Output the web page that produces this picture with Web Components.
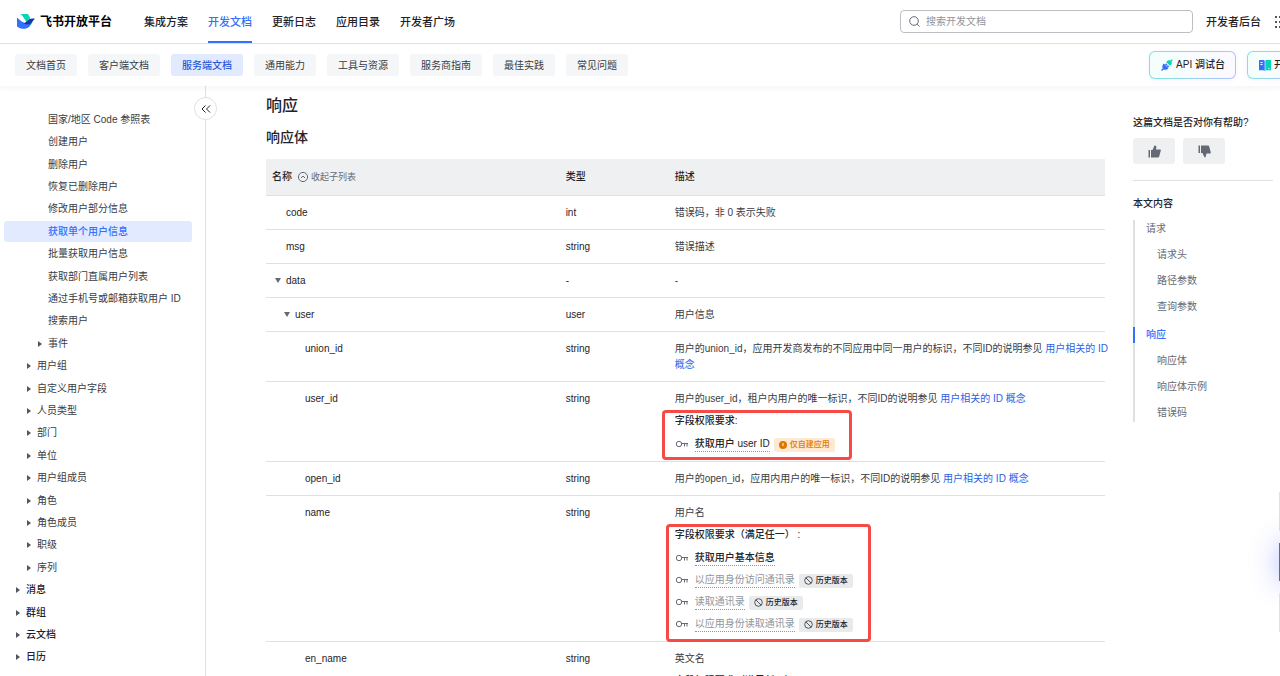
<!DOCTYPE html>
<html lang="zh-CN">
<head>
<meta charset="utf-8">
<title>获取单个用户信息 - 飞书开放平台</title>
<style>
  body {
    margin: 0;
    height: 100vh;
    overflow: hidden;
    font-family: "Liberation Sans", "Noto Sans CJK SC", sans-serif;
    font-size: 10px;
    line-height: 16px;
    color: #1f2329;
    background: #fff;
    --blue: #3370ff;
    --line: #dee0e3;
  }
</style>
</head>
<body>
<doc-page>
  <doc-header slot="header"></doc-header>
  <doc-tabs slot="header"></doc-tabs>
  <doc-sidebar slot="side"></doc-sidebar>
  <param-table></param-table>
  <doc-toc slot="toc"></doc-toc>
</doc-page>
<side-dock></side-dock>

<script>
class DocPage extends HTMLElement {
  constructor() {
    super();
    this.attachShadow({ mode: "open" });
    this.shadowRoot.innerHTML = `
      <style>
        :host { display: flex; flex-direction: column; height: 100vh; }
        header { position: relative; z-index: 1; background: #fff; box-shadow: 0 2px 6px rgba(31,35,41,.05); }
        .body { display: flex; flex: 1; min-height: 0; }
        main { flex: 1; min-width: 0; padding: 8px 28px 0 60px; overflow: hidden; }
        h1, h2 { margin: 0; font-weight: 500; }
        h1 { font-size: 16px; line-height: 24px; }
        h2 { font-size: 14px; line-height: 20px; margin: 9px 0 12px; }
      </style>
      <header><slot name="header"></slot></header>
      <div class="body">
        <slot name="side"></slot>
        <main>
          <h1>响应</h1>
          <h2>响应体</h2>
          <slot></slot>
        </main>
        <slot name="toc"></slot>
      </div>
    `;
  }
}

class DocHeader extends HTMLElement {
  constructor() {
    super();
    this.attachShadow({ mode: "open" });
    this.shadowRoot.innerHTML = `
      <style>
        :host { display: flex; align-items: center; height: 43px; padding-left: 17px; border-bottom: 1px solid var(--line); overflow: hidden; font-size: 11px; font-weight: 500; }
        a { color: inherit; text-decoration: none; white-space: nowrap; }
        .logo { display: flex; align-items: center; gap: 5px; font-size: 12px; font-weight: 700; color: #000; }
        nav { display: flex; gap: 20px; margin-left: 32px; align-self: stretch; }
        nav a { display: flex; align-items: center; border-bottom: 2px solid transparent; padding-top: 2px; }
        nav a.on { color: var(--blue); border-color: var(--blue); }
        label { display: flex; align-items: center; gap: 6px; box-sizing: border-box; width: 293px; height: 23px; margin-left: auto; padding: 0 8px; border: 1px solid #bbbfc4; border-radius: 4px; }
        input { flex: 1; min-width: 0; border: 0; outline: 0; padding: 0; font: inherit; font-size: 10px; font-weight: 400; background: none; }
        input::placeholder { color: #8f959e; }
        .console { margin: 0 14px 0 13px; }
        button { border: 0; background: none; padding: 0; margin-right: -7px; display: flex; }
      </style>
      <a class="logo" href="#">
        <svg width="18" height="15" viewBox="0 0 18 15">
          <path d="M3.400 0h7.200c1.300 1.200 2.200 2.800 2.600 4.600-1.500.5-2.800 1.700-4 2.900C7.500 4.600 5.800 2 3.400 0z" fill="#00d6b9"/>
          <path d="M0 3.600c2.800 2.900 6.300 5.400 10.500 6.300 2 .4 3.700-.3 5-2.400C13.800 12 11 14.800 6.900 14.800c-2.700 0-5-.8-6.900-2.300z" fill="#3370ff"/>
          <path d="M18 4.800c-3.400-1.100-6.300 0-8.700 2.600-.9.900-1.700 1.500-2.700 2 3.500 1.500 6.700 1.500 8.600-1.200 1-1.500 1.600-2.600 2.800-3.400z" fill="#133c9a"/>
        </svg>飞书开放平台</a>
      <nav>
        <a href="#">集成方案</a><a class="on" href="#">开发文档</a><a href="#">更新日志</a><a href="#">应用目录</a><a href="#">开发者广场</a>
      </nav>
      <label>
        <svg width="11" height="11" viewBox="0 0 11 11" fill="none" stroke="#646a73"><circle cx="5" cy="5" r="4.300"/><path d="M8.200 8.200l2.300 2.300"/></svg>
        <input type="text" placeholder="搜索开发文档" aria-label="搜索开发文档">
      </label>
      <a class="console" href="#">开发者后台</a>
      <button aria-label="更多应用">
        <svg width="12" height="12" viewBox="0 0 12 12" fill="#51565d"><path d="M0 0h2v2H0zM4 0h2v2H4zM8 0h2v2H8zM0 5h2v2H0zM4 5h2v2H4zM8 5h2v2H8zM0 10h2v2H0zM4 10h2v2H4zM8 10h2v2H8z"/></svg>
      </button>
    `;
  }
}

class DocTabs extends HTMLElement {
  constructor() {
    super();
    this.attachShadow({ mode: "open" });
    this.shadowRoot.innerHTML = `
      <style>
        :host { display: flex; align-items: center; gap: 11px; height: 42px; padding-left: 15px; overflow: hidden; }
        a { padding: 4px 11px 2px; border-radius: 3px; background: #f5f6f7; color: #373c43; text-decoration: none; white-space: nowrap; }
        a.on { background: #e1eaff; color: #245bdb; font-weight: 500; }
        .tools { display: flex; gap: 11px; margin: 0 -15px 0 auto; }
        button { display: flex; align-items: center; gap: 3px; height: 28px; padding: 0 10px 0 11px; border: 1px solid transparent; border-radius: 6px; font: inherit; font-weight: 500; color: #1f2329; white-space: nowrap;
          background: linear-gradient(100deg, #f3fffd, #fdf9ff) padding-box, linear-gradient(100deg, #7fe5da, #b3c0ff) border-box; box-shadow: 0 1px 5px rgba(51,112,255,.08); }
      </style>
      <a href="#">文档首页</a><a href="#">客户端文档</a><a class="on" href="#">服务端文档</a><a href="#">通用能力</a><a href="#">工具与资源</a><a href="#">服务商指南</a><a href="#">最佳实践</a><a href="#">常见问题</a>
      <div class="tools">
        <button>
          <svg width="12" height="12" viewBox="0 0 12 12">
            <path d="M5.200 3C6.300 1.500 8 .9 9.500 1.500L11 .2l.8.800-1.300 1.500c.6 1.500.2 3.200-1.500 4.300z" fill="#00d6b9"/>
            <path d="M2.800 4.600l4.600 4.600c-1.400 1.500-3.200 1.900-4.700 1.200L1 12l-.9-.9 1.500-1.700C1 7.800 1.300 6 2.800 4.600zM4 5.500l1.200-1.200L6.500 5.600 5.300 6.800zM5.700 7.300l1.200-1.200 1.300 1.300L7 8.600z" fill="#3370ff"/>
          </svg>API 调试台</button>
        <button>
          <svg width="12" height="11" viewBox="0 0 12 11">
            <path d="M0 0h4.500c.6 0 1 .3 1.200.7V11c-.3-.5-.7-.7-1.200-.7H0z" fill="#3370ff"/><path d="M12 0H7.500c-.6 0-1 .3-1.200.7V11c.3-.5.700-.7 1.200-.7H12z" fill="#00d6b9"/>
            <path d="M1.500 2.500h2M1.500 4.500h2M9.500 8.500h1" stroke="#fff"/>
          </svg>开</button>
      </div>
    `;
  }
}

class DocSidebar extends HTMLElement {
  constructor() {
    super();
    this.attachShadow({ mode: "open" });
    // [depth, label, has children]
    const items = [
      [3, "国家/地区 Code 参照表"], [3, "创建用户"], [3, "删除用户"], [3, "恢复已删除用户"], [3, "修改用户部分信息"],
      [3, "获取单个用户信息"], [3, "批量获取用户信息"], [3, "获取部门直属用户列表"], [3, "通过手机号或邮箱获取用户 ID"], [3, "搜索用户"],
      [2, "事件", 1], [1, "用户组", 1], [1, "自定义用户字段", 1], [1, "人员类型", 1], [1, "部门", 1], [1, "单位", 1],
      [1, "用户组成员", 1], [1, "角色", 1], [1, "角色成员", 1], [1, "职级", 1], [1, "序列", 1],
      [0, "消息", 1], [0, "群组", 1], [0, "云文档", 1], [0, "日历", 1],
    ];
    const rows = items.map(([depth, label, more]) => `
      <li><a href="#" class="d${depth}${label === "获取单个用户信息" ? " on" : ""}">${more ? '<svg width="4" height="6" viewBox="0 0 4 6"><path d="M0 0l4 3-4 3z" fill="#51565d"/></svg>' : ""}${label}</a></li>`).join("");
    this.shadowRoot.innerHTML = `
      <style>
        :host { display: flex; position: relative; box-sizing: border-box; width: 206px; border-right: 1px solid var(--line); }
        ul { flex: 1; display: flex; flex-direction: column; list-style: none; margin: 0; padding: 22px 13px 8px 4px; }
        li { flex: 1; display: flex; align-items: center; }
        a { flex: 1; display: flex; align-items: center; gap: 6px; box-sizing: border-box; height: 21px; padding-top: 1px; border-radius: 3px; color: #373c43; text-decoration: none; white-space: nowrap; }
        .d0 { padding-left: 12px; font-weight: 500; color: #1f2329; }
        .d1 { padding-left: 23px; }
        .d2 { padding-left: 34px; }
        .d3 { padding-left: 44px; }
        .on { background: #e1eaff; color: var(--blue); font-weight: 500; }
        button { position: absolute; top: 11px; right: -12px; width: 23px; height: 23px; padding: 0; display: grid; place-items: center; border: 1px solid var(--line); border-radius: 50%; background: #fff; }
      </style>
      <ul>${rows}</ul>
      <button aria-label="收起目录">
        <svg width="10" height="8" viewBox="0 0 10 8" fill="none" stroke="#1f2329"><path d="M4.500 .5L1 4l3.500 3.500M9 .5L5.500 4 9 7.500"/></svg>
      </button>
    `;
  }
}

class ScopeBox extends HTMLElement {
  constructor() {
    super();
    this.attachShadow({ mode: "open" });
    this.shadowRoot.innerHTML = `
      <style>
        :host { display: block; position: relative; margin: 3px 0 -2px; line-height: 22px; }
        .title { margin-bottom: 1px; color: #1f2329; }
        b { font-weight: 500; }
        .mark { display: none; position: absolute; border: 3px solid #f54a45; border-radius: 4px; box-sizing: border-box; pointer-events: none; }
        :host([mark="single"]) .mark { display: block; top: 0; left: -13px; width: 190px; height: 50px; }
        :host([mark="list"]) .mark { display: block; top: 0; left: -9px; width: 205px; height: 118px; }
      </style>
      <div class="title"><b>${this.getAttribute("heading")}</b>${this.getAttribute("colon") || ""}</div>
      <slot></slot>
      <div class="mark"></div>
    `;
  }
}

class ScopeItem extends HTMLElement {
  constructor() {
    super();
    this.attachShadow({ mode: "open" });
    const tag = this.getAttribute("tag");
    const icon = tag === "custom"
      ? '<svg width="8" height="8" viewBox="0 0 8 8"><circle cx="4" cy="4" r="4" fill="#de7802"/><path d="M4 2v3" stroke="#fff"/></svg>仅自建应用'
      : '<svg width="9" height="9" viewBox="0 0 9 9" fill="none" stroke="#51565d"><circle cx="4.500" cy="4.500" r="3.800"/><path d="M2 2l5 5"/></svg>历史版本';
    this.shadowRoot.innerHTML = `
      <style>
        :host { display: flex; align-items: center; height: 22px; white-space: nowrap; }
        a { margin: 0 4px 0 6px; line-height: 14px; border-bottom: 1px dotted #8f959e; color: #1f2329; font-weight: 500; text-decoration: none; }
        :host([tag="old"]) a { color: #8f959e; font-weight: 400; }
        .tag { display: flex; align-items: center; gap: 3px; height: 14px; margin-top: 1px; padding: 0 5px; border-radius: 2px; font-size: 8px; font-weight: 500; background: #e9eaeb; color: #1f2329; }
        .tag.custom { background: #feead2; color: #de7802; }
      </style>
      <svg width="14" height="8" viewBox="0 0 14 8" fill="none" stroke="#646a73"><circle cx="4" cy="4" r="2.700"/><path d="M6.700 3.500H13M9.500 3.500v3M12 3.500v3"/></svg>
      <a href="#"><slot></slot></a>
      ${tag ? `<span class="tag ${tag}">${icon}</span>` : ""}
    `;
  }
}

class ParamTable extends HTMLElement {
  constructor() {
    super();
    this.attachShadow({ mode: "open" });
    const rows = [
      [1, "code", "int", "错误码，非 0 表示失败"],
      [1, "msg", "string", "错误描述"],
      [1, "data", "-", "-", 1],
      [2, "user", "user", "用户信息", 1],
      [3, "union_id", "string", `<span class="line">用户的union_id，应用开发商发布的不同应用中同一用户的标识，不同ID的说明参见 <a href="#">用户相关的 ID<br>概念</a></span>`],
      [3, "user_id", "string", `用户的user_id，租户内用户的唯一标识，不同ID的说明参见 <a href="#">用户相关的 ID 概念</a>
        <scope-box heading="字段权限要求" colon=":" mark="single">
          <scope-item tag="custom">获取用户 user ID</scope-item>
        </scope-box>`],
      [3, "open_id", "string", `用户的open_id，应用内用户的唯一标识，不同ID的说明参见 <a href="#">用户相关的 ID 概念</a>`],
      [3, "name", "string", `用户名
        <scope-box heading="字段权限要求（满足任一）" colon=" :" mark="list">
          <scope-item>获取用户基本信息</scope-item>
          <scope-item tag="old">以应用身份访问通讯录</scope-item>
          <scope-item tag="old">读取通讯录</scope-item>
          <scope-item tag="old">以应用身份读取通讯录</scope-item>
        </scope-box>`],
      [3, "en_name", "string", `英文名
        <scope-box heading="字段权限要求（满足任一）" colon=" :"></scope-box>`],
    ];
    const body = rows.map(([depth, name, type, desc, open]) => `
      <tr>
        <td class="name d${depth}">${open ? '<svg width="6" height="5" viewBox="0 0 6 5"><path d="M0 0h6L3 5z" fill="#646a73"/></svg>' : ""}${name}</td>
        <td class="type">${type}</td>
        <td>${desc}</td>
      </tr>`).join("");
    this.shadowRoot.innerHTML = `
      <style>
        :host { display: block; }
        table { width: 100%; table-layout: fixed; border-collapse: separate; border-spacing: 0; }
        th, td { box-sizing: border-box; padding: 9px 0 8px 6px; text-align: left; vertical-align: top; border-bottom: 1px solid var(--line); }
        th { padding-top: 10px; padding-bottom: 10px; font-weight: 500; background: #eff0f1; }
        th:nth-child(1) { width: 35%; }
        th:nth-child(2) { width: 13%; }
        th:nth-child(1) div { display: flex; align-items: center; }
        button { display: flex; align-items: center; gap: 2px; margin-left: 5px; padding: 0; border: 0; background: none; font: inherit; font-size: 9px; font-weight: 400; color: #646a73; }
        td { color: #373c43; }
        .name, .type { color: #1f2329; font-weight: 500; }
        .name svg { margin: 0 5px 1px -11px; vertical-align: middle; }
        .d1 { padding-left: 20px; }
        .d2 { padding-left: 29px; }
        .d3 { padding-left: 39px; }
        a { color: #2b62e6; text-decoration: none; }
        .line { white-space: nowrap; }
      </style>
      <table>
        <thead>
          <tr>
            <th><div>名称<button><svg width="12" height="12" viewBox="0 0 12 12" fill="none" stroke="#646a73"><circle cx="6" cy="6" r="4.600"/><path d="M4 7l2-2 2 2"/></svg>收起子列表</button></div></th>
            <th>类型</th>
            <th>描述</th>
          </tr>
        </thead>
        <tbody>${body}</tbody>
      </table>
    `;
  }
}

class DocToc extends HTMLElement {
  constructor() {
    super();
    this.attachShadow({ mode: "open" });
    this.shadowRoot.innerHTML = `
      <style>
        :host { display: block; box-sizing: border-box; width: 147px; padding: 29px 7px 0 0; }
        p, h3 { margin: 0; font-size: 10px; font-weight: 500; }
        .vote { display: flex; gap: 8px; padding: 7px 0 16px; border-bottom: 1px solid var(--line); }
        button { display: grid; place-items: center; width: 42px; height: 26px; padding: 0; border: 0; border-radius: 3px; background: #eff0f1; }
        h3 { margin: 15px 0 8px; }
        ul { list-style: none; margin: 0; padding: 1px 0; border-left: 2px solid var(--line); display: flex; flex-direction: column; gap: 10px; }
        a { display: block; padding-left: 22px; color: #646a73; text-decoration: none; }
        .top { padding-left: 11px; }
        li + li .top { margin-top: 2px; }
        .on { margin-left: -2px; border-left: 2px solid var(--blue); color: var(--blue); font-weight: 500; }
      </style>
      <p>这篇文档是否对你有帮助?</p>
      <div class="vote">
        <button aria-label="有帮助"><svg width="13" height="13" viewBox="0 0 13 13" fill="#646a73"><path d="M.5 5H2v7.500H.5zM3 5h1.500L6.500.5c1.300-.2 2 .6 1.900 1.800L8 4.500h4c.6 0 1 .5.8 1.100l-1.600 6c-.2.600-.6.900-1.200.9H3z"/></svg></button>
        <button aria-label="没有帮助"><svg width="13" height="13" viewBox="0 0 13 13" fill="#646a73"><path d="M.5.5H2V8H.5zM3 .5h7c.6 0 1 .3 1.200.9l1.600 6c.2.600-.2 1.100-.8 1.100H8.500l-1 3.800c-.6.300-1 .1-1.300-.5L4.500 8H3z"/></svg></button>
      </div>
      <h3>本文内容</h3>
      <ul>
        <li><a class="top" href="#">请求</a></li>
        <li><a href="#">请求头</a></li>
        <li><a href="#">路径参数</a></li>
        <li><a href="#">查询参数</a></li>
        <li><a class="top on" href="#">响应</a></li>
        <li><a href="#">响应体</a></li>
        <li><a href="#">响应体示例</a></li>
        <li><a href="#">错误码</a></li>
      </ul>
    `;
  }
}

// Floating help buttons, tucked against the right edge of the window
class SideDock extends HTMLElement {
  constructor() {
    super();
    this.attachShadow({ mode: "open" });
    this.shadowRoot.innerHTML = `
      <style>
        :host { position: fixed; right: -39px; bottom: 44px; width: 40px; display: grid; gap: 12px; }
        i { height: 39px; background: var(--line); }
        .main { height: 38px; background: var(--blue); box-shadow: 0 0 28px rgba(51,80,255,.35); }
      </style>
      <i></i><i class="main"></i><i></i>
    `;
  }
}

customElements.define("doc-page", DocPage);
customElements.define("doc-header", DocHeader);
customElements.define("doc-tabs", DocTabs);
customElements.define("doc-sidebar", DocSidebar);
customElements.define("scope-box", ScopeBox);
customElements.define("scope-item", ScopeItem);
customElements.define("param-table", ParamTable);
customElements.define("doc-toc", DocToc);
customElements.define("side-dock", SideDock);
</script>
</body>
</html>
